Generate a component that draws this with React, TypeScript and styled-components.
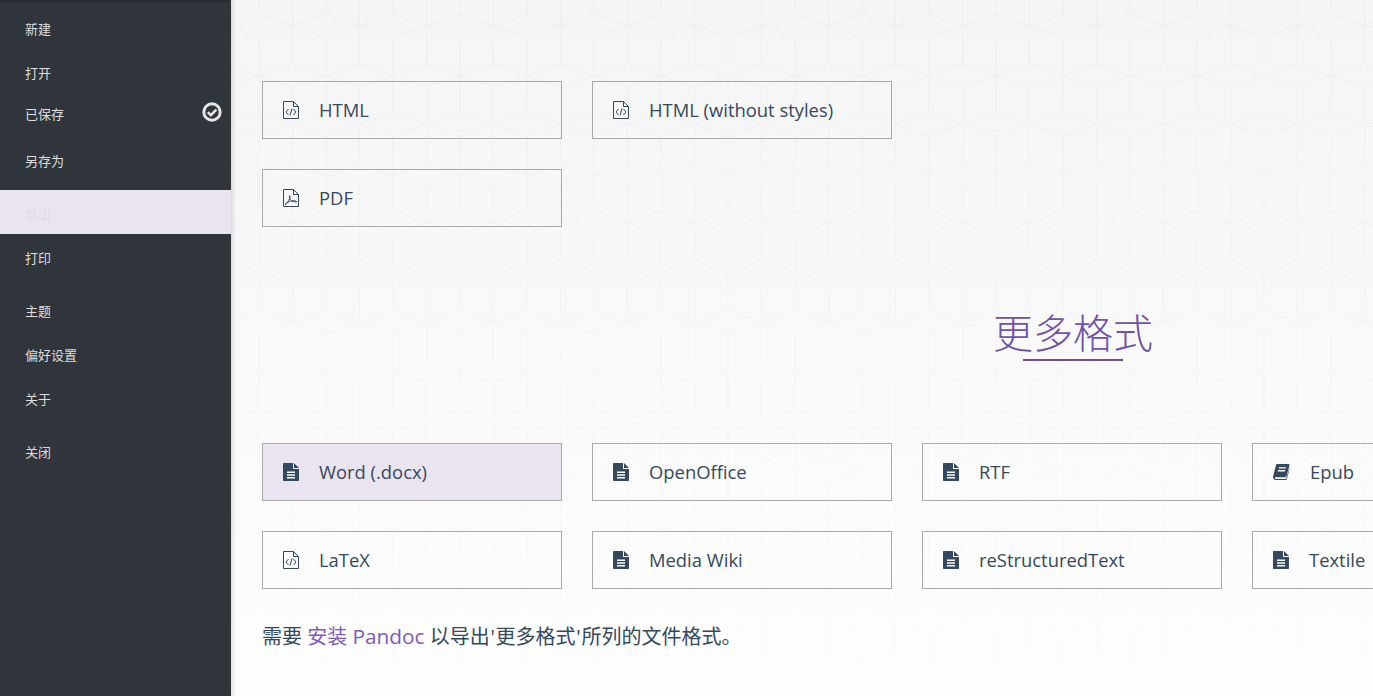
import styled, { createGlobalStyle } from 'styled-components';

const GlobalStyle = createGlobalStyle`
  html, body {
    margin: 0;
    height: 100%;
    overflow: hidden;
  }

  #root {
    height: 100%;
  }
`;

const patternTile = encodeURIComponent(
  '<svg xmlns="http://www.w3.org/2000/svg" width="67" height="98.7" viewBox="0 0 67 98.7">' +
    '<path fill="none" stroke="#eeeeee" stroke-width="1" d="' +
    'M0 0L33.5 11.4L0 23.3L-33.5 11.4ZM67 0L100.5 11.4L67 23.3L33.5 11.4Z' +
    'M0 23.3V61.5M67 23.3V61.5M33.5 11.4V49.3' +
    'M33.5 49.3L67 61.5L33.5 72.8L0 61.5Z' +
    'M0 61.5V98.7M67 61.5V98.7M33.5 72.8V98.7M33.5 0V11.4"/></svg>',
);

const Page = styled.div`
  display: flex;
  height: 100%;
  font-family: 'Open Sans', 'Noto Sans CJK SC', sans-serif;
`;

const Sidebar = styled.nav`
  position: relative;
  z-index: 1;
  flex: 0 0 231px;
  box-sizing: border-box;
  padding-top: 3px;
  background: #30353c;
  border-top: 2px solid #262a30;
  box-shadow: 1px 0 5px rgba(0, 0, 0, 0.18);
`;

const MenuItem = styled.div<{ $gap?: number; $active?: boolean }>`
  display: flex;
  align-items: center;
  justify-content: space-between;
  box-sizing: border-box;
  height: 44px;
  margin-top: ${(p) => p.$gap ?? 0}px;
  padding: 3px 9px 0 25px;
  font-size: 13px;
  color: #dddddd;
  background: ${(p) => (p.$active ? '#e9e4f0' : 'transparent')};
`;

const SavedMark = styled.svg`
  flex: none;
  margin-top: -3px;
`;

const Main = styled.main`
  flex: 1;
  min-width: 0;
  box-sizing: border-box;
  padding: 81px 0 0 31px;
  overflow: hidden;
  background-color: #f5f5f5;
  background-image: linear-gradient(rgba(255, 255, 255, 0), rgba(255, 255, 255, 0.85)),
    url("data:image/svg+xml,${patternTile}");
  background-position: 0 0, 28px 14px;
`;

const Row = styled.div`
  display: flex;
  gap: 30px;
  margin-bottom: 30px;
`;

const FormatCard = styled.div<{ $active?: boolean }>`
  display: flex;
  flex: 0 0 300px;
  align-items: center;
  gap: 20px;
  box-sizing: border-box;
  height: 58px;
  padding: 0 0 2px 20px;
  border: 1px solid #aaaaaa;
  background: ${(p) => (p.$active ? '#e9e4f0' : 'transparent')};
  color: #34495e;
  font-size: 18.4px;
`;

const CardIcon = styled.svg`
  flex: none;
  margin-top: 2px;
  fill: #34495e;
`;

const SectionTitle = styled.h2`
  width: 1622px;
  margin: 79px 0 82px;
  text-align: center;
  font-size: 40px;
  font-weight: 300;
  line-height: 54px;
  color: #6f52aa;

  &::after {
    content: '';
    display: block;
    width: 100px;
    height: 2px;
    margin: -1px auto 0;
    background: #6b4ea6;
  }
`;

const Note = styled.p`
  margin: 34px 0 0;
  font-size: 20px;
  line-height: 27px;
  color: #34495e;
`;

const NoteLink = styled.a`
  color: #7e5bbd;
`;

const LatinWord = styled.span`
  font-size: 20.8px;
`;

const Quote = styled.span`
  padding: 0 0.75px;
`;

function CodeFileIcon() {
  return (
    <CardIcon width="16" height="18" viewBox="0 0 16 18">
      <path
        fill="none"
        stroke="#34495e"
        d="M.5 .5H10.5L15.5 5.5V17.5H.5ZM10.5 .5V5.5H15.5"
      />
      <path
        fill="none"
        stroke="#34495e"
        d="M5.5 8L3 11L5.5 14M10.5 8L13 11L10.5 14M9 7.5L7 14.5"
      />
    </CardIcon>
  );
}

function PdfFileIcon() {
  return (
    <CardIcon width="16" height="18" viewBox="0 0 16 18">
      <path
        fill="none"
        stroke="#34495e"
        d="M.5 .5H10.5L15.5 5.5V17.5H.5ZM10.5 .5V5.5H15.5"
      />
      <path
        fill="none"
        stroke="#34495e"
        d="M2 15.5C4.5 14 7 10 7 7.5C7 6 6 6.5 6.5 8.5C7 11 9.5 13 13.5 13C14 12 11 11.5 8 12C6 12.4 4 14 2 15.5Z"
      />
    </CardIcon>
  );
}

function TextFileIcon() {
  return (
    <CardIcon width="16" height="18" viewBox="0 0 16 18">
      <path d="M1 0H10V6H16V17C16 17.6 15.6 18 15 18H1C.4 18 0 17.6 0 17V1C0 .4 .4 0 1 0Z" />
      <path d="M11 0L16 5H11Z" />
      <path fill="#ffffff" d="M4 8.5H12V10H4ZM4 11.2H12V12.7H4ZM4 13.9H12V15.4H4Z" />
    </CardIcon>
  );
}

function BookIcon() {
  return (
    <CardIcon width="17" height="18" viewBox="0 0 17 18">
      <path d="M4 1H15.5C16.3 1 16.7 1.6 16.5 2.3L13.4 13.2C13.2 13.9 12.7 14.2 12 14.2H3C2 14.2 1.6 14.8 2 15.4C2.3 15.9 2.9 16 3.4 16H13L16.4 5V6.5L13.8 16.2C13.6 16.8 13.2 17 12.6 17H3C1.4 17 0 15.8 0 14.2C0 13.8 .1 13.4 .2 13L3 2C3.2 1.4 3.5 1 4 1Z" />
      <path fill="#ffffff" d="M6 4.2H13L12.6 5.6H5.6ZM5.2 7H12.2L11.8 8.4H4.8Z" />
    </CardIcon>
  );
}

function SavedIcon() {
  return (
    <SavedMark width="20" height="20" viewBox="0 0 20 20">
      <circle cx="10" cy="10" r="8.2" fill="none" stroke="#e4e4e4" strokeWidth="3" />
      <path
        d="M5.8 10.2L8.8 13.2L14.4 7.6"
        fill="none"
        stroke="#e4e4e4"
        strokeWidth="2.6"
      />
    </SavedMark>
  );
}

function App() {
  return (
    <Page>
      <GlobalStyle />
      <Sidebar>
        <MenuItem>新建</MenuItem>
        <MenuItem>打开</MenuItem>
        <MenuItem $gap={-3}>
          已保存
          <SavedIcon />
        </MenuItem>
        <MenuItem $gap={3}>另存为</MenuItem>
        <MenuItem $gap={9} $active>
          导出
        </MenuItem>
        <MenuItem>打印</MenuItem>
        <MenuItem $gap={9}>主题</MenuItem>
        <MenuItem>偏好设置</MenuItem>
        <MenuItem>关于</MenuItem>
        <MenuItem $gap={9}>关闭</MenuItem>
      </Sidebar>
      <Main>
        <Row>
          <FormatCard>
            <CodeFileIcon />
            HTML
          </FormatCard>
          <FormatCard>
            <CodeFileIcon />
            HTML (without styles)
          </FormatCard>
        </Row>
        <Row>
          <FormatCard>
            <PdfFileIcon />
            PDF
          </FormatCard>
        </Row>
        <SectionTitle>更多格式</SectionTitle>
        <Row>
          <FormatCard $active>
            <TextFileIcon />
            Word (.docx)
          </FormatCard>
          <FormatCard>
            <TextFileIcon />
            OpenOffice
          </FormatCard>
          <FormatCard>
            <TextFileIcon />
            RTF
          </FormatCard>
          <FormatCard>
            <BookIcon />
            Epub
          </FormatCard>
        </Row>
        <Row>
          <FormatCard>
            <CodeFileIcon />
            LaTeX
          </FormatCard>
          <FormatCard>
            <TextFileIcon />
            Media Wiki
          </FormatCard>
          <FormatCard>
            <TextFileIcon />
            reStructuredText
          </FormatCard>
          <FormatCard>
            <TextFileIcon />
            Textile
          </FormatCard>
        </Row>
        <Note>
          需要{' '}
          <NoteLink>
            安装 <LatinWord>Pandoc</LatinWord>
          </NoteLink>{' '}
          以导出<Quote>'</Quote>更多格式<Quote>'</Quote>所列的文件格式。
        </Note>
      </Main>
    </Page>
  );
}

export default App;
